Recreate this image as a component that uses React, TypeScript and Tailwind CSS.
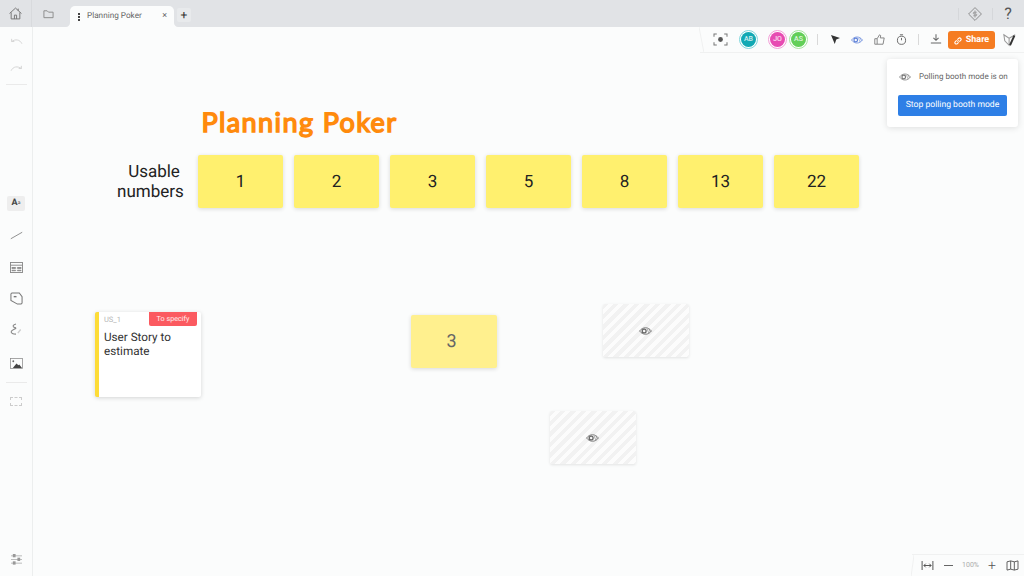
import React from "react";

const Eye = ({ className = "", color = "#555" }: { className?: string; color?: string }) => (
  <svg viewBox="0 0 24 14" className={`shrink-0 ${className}`} fill="none" stroke={color}>
    <path d="M1 7C4 3 8 1 12 1s8 2 11 6c-3 4-7 6-11 6S4 11 1 7z" strokeWidth="1.5" />
    <circle cx="9.5" cy="7" r="3.6" strokeWidth="2.4" />
    <path d="M15 3l3 8M18 3l3 6" strokeWidth="1.4" opacity=".7" />
  </svg>
);

const Avatar = ({ t, c, ring }: { t: string; c: string; ring: string }) => (
  <div className="w-[19px] h-[19px] rounded-full border flex items-center justify-center bg-white" style={{ borderColor: ring }}>
    <div className="w-[15px] h-[15px] rounded-full text-white/80 text-[7px] font-medium flex items-center justify-center" style={{ background: c }}>{t}</div>
  </div>
);

const Num = ({ n }: { n: string }) => (
  <div className="w-[85px] h-[53px] pt-[2px] bg-[#fff06e] rounded-[2px] shadow-[0_1px_4px_rgba(0,0,0,0.14)] flex items-center justify-center text-[17px] text-[#222]">{n}</div>
);

const hatch = "bg-[repeating-linear-gradient(135deg,#f2f2f2_0px,#f2f2f2_3.7px,#fcfcfc_3.7px,#fcfcfc_7.4px)]";

export default function App() {
  return (
    <div className="w-[1024px] h-[576px] overflow-hidden flex flex-col bg-[#fbfcfc] font-['Roboto',sans-serif] text-[#333] [text-rendering:geometricPrecision]">
      {/* tab bar */}
      <header className="h-[27px] bg-[#e1e3e6] flex items-stretch shrink-0">
        <div className="w-[32px] border-r border-[#d8dadd] flex items-center justify-center">
          <svg viewBox="0 0 24 24" className="w-[13px] h-[13px]" fill="none" stroke="#777" strokeWidth="1.8"><path d="M1 12L12 2l11 10M4 10v12h16V10M10 22v-7h4v7M17 3v4" /></svg>
        </div>
        <div className="w-[32px] flex items-center justify-center">
          <svg viewBox="0 0 24 20" className="w-[11px] h-[10px]" fill="none" stroke="#888" strokeWidth="2"><path d="M2 3h7l3 3h10v12H2z" strokeLinejoin="round" /></svg>
        </div>
        <div className="ml-[6px] w-[104px] mt-[6px] bg-[#fbfcfc] rounded-t-[5px] flex items-center pl-[8px] pr-[7px] text-[#666] text-[8.2px] relative">
          <svg viewBox="0 0 4 4" className="absolute -left-[4px] bottom-0 w-[4px] h-[4px]" fill="#fbfcfc"><path d="M4 0v4H0c2 0 4-2 4-4z" /></svg>
          <svg viewBox="0 0 4 4" className="absolute -right-[4px] bottom-0 w-[4px] h-[4px]" fill="#fbfcfc"><path d="M0 0v4h4C2 4 0 2 0 0z" /></svg>
          <span className="flex flex-col gap-[1px] mr-[7px]">
            <i className="w-[2px] h-[2px] bg-[#444] block" /><i className="w-[2px] h-[2px] bg-[#444] block" /><i className="w-[2px] h-[2px] bg-[#444] block" />
          </span>
          <span className="flex-1 whitespace-nowrap">Planning Poker</span>
          <span className="text-[9px] leading-none">×</span>
        </div>
        <div className="ml-[3px] mt-[8px] w-[14px] h-[14px] rounded-[2px] bg-[#e8eaec] flex items-center justify-center text-[#333] text-[12px] leading-none">+</div>
        <div className="flex-1" />
        <div className="flex items-center pr-[9px]">
          <div className="h-[12px] border-l border-[#d5d7da] mr-[9px]" />
          <svg viewBox="0 0 24 24" className="w-[14px] h-[14px] mr-[10px]" fill="none" stroke="#888" strokeWidth="1.6"><path d="M12 1l11 11-11 11L1 12z" /><path d="M15 9H10.5a1.5 1.5 0 000 3h3a1.5 1.5 0 010 3H9M12 6v12" strokeWidth="1.2" /></svg>
          <div className="h-[12px] border-l border-[#d5d7da] mr-[8px]" />
          <span className="text-[16px] text-[#555] w-[14px] text-center">?</span>
        </div>
      </header>

      <div className="flex-1 flex min-h-0">
        {/* left rail */}
        <aside className="w-[33px] shrink-0 border-r border-[#eceeee] flex flex-col items-center relative">
          <svg viewBox="0 0 24 14" className="w-[13px] h-[8px] mt-[10px] shrink-0" fill="none" stroke="#d4d4d4" strokeWidth="1.8"><path d="M22 12C18 4 10 3 3 8M3 3v5h5" /></svg>
          <svg viewBox="0 0 24 14" className="w-[13px] h-[8px] mt-[19px] shrink-0" fill="none" stroke="#d4d4d4" strokeWidth="1.8"><path d="M2 12C6 4 14 3 21 8M21 3v5h-5" /></svg>
          <div className="w-[21px] border-t border-[#eaeaea] mt-[12px]" />
          <div className="mt-[111px] w-[18px] h-[15px] bg-[#eeeeee] rounded-[2px] flex items-center justify-center text-[#444] text-[9px] font-bold leading-none">A<span className="text-[5px] font-normal">a</span></div>
          <svg viewBox="0 0 16 10" className="w-[13px] h-[9px] mt-[20px] shrink-0" stroke="#777"><path d="M1 9L15 1" strokeWidth="1" /></svg>
          <svg viewBox="0 0 14 12" className="w-[13px] h-[11px] mt-[22px] shrink-0" fill="none" stroke="#888"><rect x=".5" y=".5" width="13" height="11" strokeWidth="1" /><path d="M.5 3.5h13M2 6h4v1H2zM8 6h4v1H8zM2 9h4v.5H2zM8 9h4v.5H8z" strokeWidth="1" /></svg>
          <svg viewBox="0 0 14 14" className="w-[13px] h-[13px] mt-[19px] shrink-0" fill="none" stroke="#777"><path d="M2 1h8l3 4v7l-1 1H8L1 9V2z" strokeWidth="1.1" /><path d="M4 5h3" strokeWidth="1.5" /></svg>
          <svg viewBox="0 0 14 14" className="w-[14px] h-[13px] mt-[18px] shrink-0" fill="none" stroke="#888"><path d="M7 1C3 2 3 4 6 5S3 7 2 9s2 3 5 3" strokeWidth="1.2" /><path d="M9 11l3-4" stroke="#ccc" strokeWidth="1.4" /></svg>
          <svg viewBox="0 0 14 12" className="w-[13px] h-[11px] mt-[22px] shrink-0" fill="none" stroke="#888"><rect x=".5" y=".5" width="13" height="11" strokeWidth=".8" /><path d="M3 11l4-5 2 2 1-1 3 4z" fill="#444" stroke="none" /><circle cx="3.5" cy="3.5" r="1" fill="#666" stroke="none" /></svg>
          <div className="w-[21px] border-t border-[#eaeaea] mt-[13px]" />
          <div className="w-[12px] h-[9px] mt-[14px] border border-dashed border-[#ccc]" />
          <div className="flex-1" />
          <svg viewBox="0 0 14 12" className="w-[13px] h-[11px] mb-[11px] shrink-0" stroke="#888"><path d="M1 2h12M1 6h12M1 10h12" strokeWidth=".6" /><rect x="3" y="0" width="3" height="3.6" fill="#999" stroke="none" /><rect x="8" y="4" width="3" height="3.6" fill="#999" stroke="none" /><rect x="3" y="8" width="3" height="3.6" fill="#999" stroke="none" /></svg>
        </aside>

        {/* canvas */}
        <main className="flex-1 relative">
          {/* toolbar */}
          <div className="absolute top-0 right-0 w-[324px] h-[26px] flex items-center border-b border-[#f0f1f1] text-[#555]">
            <svg viewBox="0 0 5 26" className="absolute -left-[1px] top-0 w-[5px] h-[26px]" fill="none" stroke="#f0f1f1"><path d="M0 0l5 26" /></svg>
            <svg viewBox="0 0 16 14" className="ml-[13px] w-[15px] h-[13px] shrink-0" fill="none" stroke="#777"><path d="M1 4V1h3M12 1h3v3M15 10v3h-3M4 13H1v-3" strokeWidth="1.1" /><circle cx="8" cy="7" r="2.6" fill="#555" stroke="none" /></svg>
            <div className="ml-[11px]"><Avatar t="AB" c="#11a9b4" ring="#7fd6dc" /></div>
            <div className="ml-[10px]"><Avatar t="JO" c="#e74bb2" ring="#f3a0d8" /></div>
            <div className="ml-[2px]"><Avatar t="AS" c="#62cf58" ring="#a5e69f" /></div>
            <div className="ml-[9px] h-[11px] border-l border-[#d9d9d9]" />
            <svg viewBox="0 0 12 12" className="ml-[13px] w-[9px] h-[9px] shrink-0" fill="#333"><path d="M0 0l12 4-5 2-2 6z" /></svg>
            <Eye className="ml-[11px] w-[12px] h-[8px]" color="#5b7fd8" />
            <svg viewBox="0 0 14 14" className="ml-[11px] w-[11px] h-[11px] shrink-0" fill="none" stroke="#777" strokeWidth="1.1"><path d="M1 6h3v7H1zM4 6l3-5 1.5 1L8 5h5l-1.5 8H4" /></svg>
            <svg viewBox="0 0 14 14" className="ml-[11px] w-[11px] h-[11px] shrink-0" fill="none" stroke="#666" strokeWidth="1.2"><circle cx="7" cy="8" r="5.2" /><path d="M5 1h4M7 5v3" /></svg>
            <div className="ml-[11px] h-[11px] border-l border-[#d9d9d9]" />
            <svg viewBox="0 0 14 12" className="ml-[11px] w-[12px] h-[11px] shrink-0" fill="none" stroke="#666" strokeWidth="1.2"><path d="M7 0v6M4 4l3 3 3-3M1 10h12" /></svg>
            <div className="ml-[6px] w-[47px] h-[18px] pt-[2px] shrink-0 rounded-[3px] bg-[#f57c22] text-white text-[9px] font-bold flex items-center justify-center gap-[4px]">
              <svg viewBox="0 0 12 12" className="w-[8px] h-[8px]" fill="none" stroke="#fff" strokeWidth="1.6"><path d="M5 7l2-2M4 5L2 7a2 2 0 003 3l2-2M8 7l2-2a2 2 0 00-3-3L5 4" /></svg>
              Share
            </div>
            <svg viewBox="0 0 16 16" className="ml-[8px] w-[14px] h-[14px] shrink-0" fill="none" stroke="#999" strokeWidth="1.2"><path d="M1 2l6 4v8L2 9zM7 6l7-4" /><path d="M13 3L8 14" stroke="#333" strokeWidth="2.2" /></svg>
          </div>

          {/* popover */}
          <div className="absolute left-[854px] top-[32px] w-[131px] h-[68px] bg-white rounded-[3px] shadow-[0_1px_6px_rgba(0,0,0,0.12)] px-[11px]">
            <div className="h-[36px] flex items-center text-[8.05px] text-[#666] whitespace-nowrap">
              <Eye className="w-[12px] h-[8px] ml-[1px] mr-[8px]" color="#777" />
              Polling booth mode is on
            </div>
            <div className="h-[21px] bg-[#2e7fe6] rounded-[2px] text-white text-[8.6px] flex items-center justify-center whitespace-nowrap">Stop polling booth mode</div>
          </div>

          {/* title */}
          <div className="absolute left-[168.5px] top-[79px] text-[27px] leading-[32px] font-normal text-[#ff8a0c] tracking-[1.4px] whitespace-nowrap font-['Lato',sans-serif] [-webkit-text-stroke:1.5px_#ff8a0c]">Planning Poker</div>

          {/* numbers */}
          <div className="absolute left-[165px] top-[128px] flex gap-[11px]">
            {["1", "2", "3", "5", "8", "13", "22"].map((n) => <Num key={n} n={n} />)}
          </div>
          <div className="absolute left-[74px] top-[135px] w-[87px] text-center text-[17px] leading-[20px] text-[#222]"><span className="inline-block pl-[7px]">Usable</span><br />numbers</div>

          {/* user story */}
          <div className="absolute left-[61.5px] top-[285px] w-[106.5px] h-[85px] bg-white border-l-[4px] border-[#fddc37] rounded-[2px] shadow-[0_1px_4px_rgba(0,0,0,0.16)]">
            <div className="absolute right-[4px] top-0 w-[48px] h-[14px] bg-[#fb5a60] rounded-b-[2px] text-white/90 text-[7.2px] flex items-center justify-center">To specify</div>
            <div className="pl-[5.5px] pt-[3px] text-[7.5px] text-[#b5b5b5] leading-[10px]">US_1</div>
            <div className="pl-[5.5px] pt-[5px] text-[11.7px] leading-[14px] text-[#333]">User Story to<br />estimate</div>
          </div>

          {/* voted card */}
          <div className="absolute left-[378px] top-[288px] w-[86px] h-[53px] pr-[5px] bg-[#fff08e] rounded-[2px] shadow-[0_1px_4px_rgba(0,0,0,0.14)] flex items-center justify-center text-[18px] text-[#666]">3</div>

          {/* hidden cards */}
          <div className={`absolute left-[570px] top-[277px] w-[86px] h-[53px] pr-[2px] rounded-[2px] shadow-[0_1px_3px_rgba(0,0,0,0.1)] flex items-center justify-center ${hatch}`}>
            <Eye className="w-[13px] h-[8px]" color="#666" />
          </div>
          <div className={`absolute left-[517px] top-[384px] w-[86px] h-[53px] pr-[2px] rounded-[2px] shadow-[0_1px_3px_rgba(0,0,0,0.1)] flex items-center justify-center ${hatch}`}>
            <Eye className="w-[13px] h-[8px]" color="#666" />
          </div>

          {/* zoom */}
          <div className="absolute right-0 bottom-0 w-[112px] h-[22px] flex items-center text-[#555] border-t border-[#f0f1f1]">
            <svg viewBox="0 0 3 22" className="absolute -left-[1px] top-0 w-[3px] h-[22px]" fill="none" stroke="#f0f1f1"><path d="M3 0L0 22" /></svg>
            <svg viewBox="0 0 14 10" className="ml-[9px] w-[13px] h-[9px] shrink-0" fill="none" stroke="#555" strokeWidth="1.1"><path d="M1 0v10M13 0v10M3 5h8M5 3L3 5l2 2M9 3l2 2-2 2" /></svg>
            <span className="ml-[10px] w-[9px] border-t border-[#666] shrink-0" />
            <span className="ml-[8px] text-[7px] text-[#aaa] w-[19px] text-center shrink-0">100%</span>
            <span className="ml-[8px] text-[14px] leading-none font-light shrink-0">+</span>
            <svg viewBox="0 0 14 12" className="ml-[10px] w-[13px] h-[11px] shrink-0" fill="none" stroke="#555" strokeWidth="1"><path d="M1 2l4-1 4 1 4-1v9l-4 1-4-1-4 1zM5 1v9M9 2v9" /></svg>
          </div>
        </main>
      </div>
    </div>
  );
}
